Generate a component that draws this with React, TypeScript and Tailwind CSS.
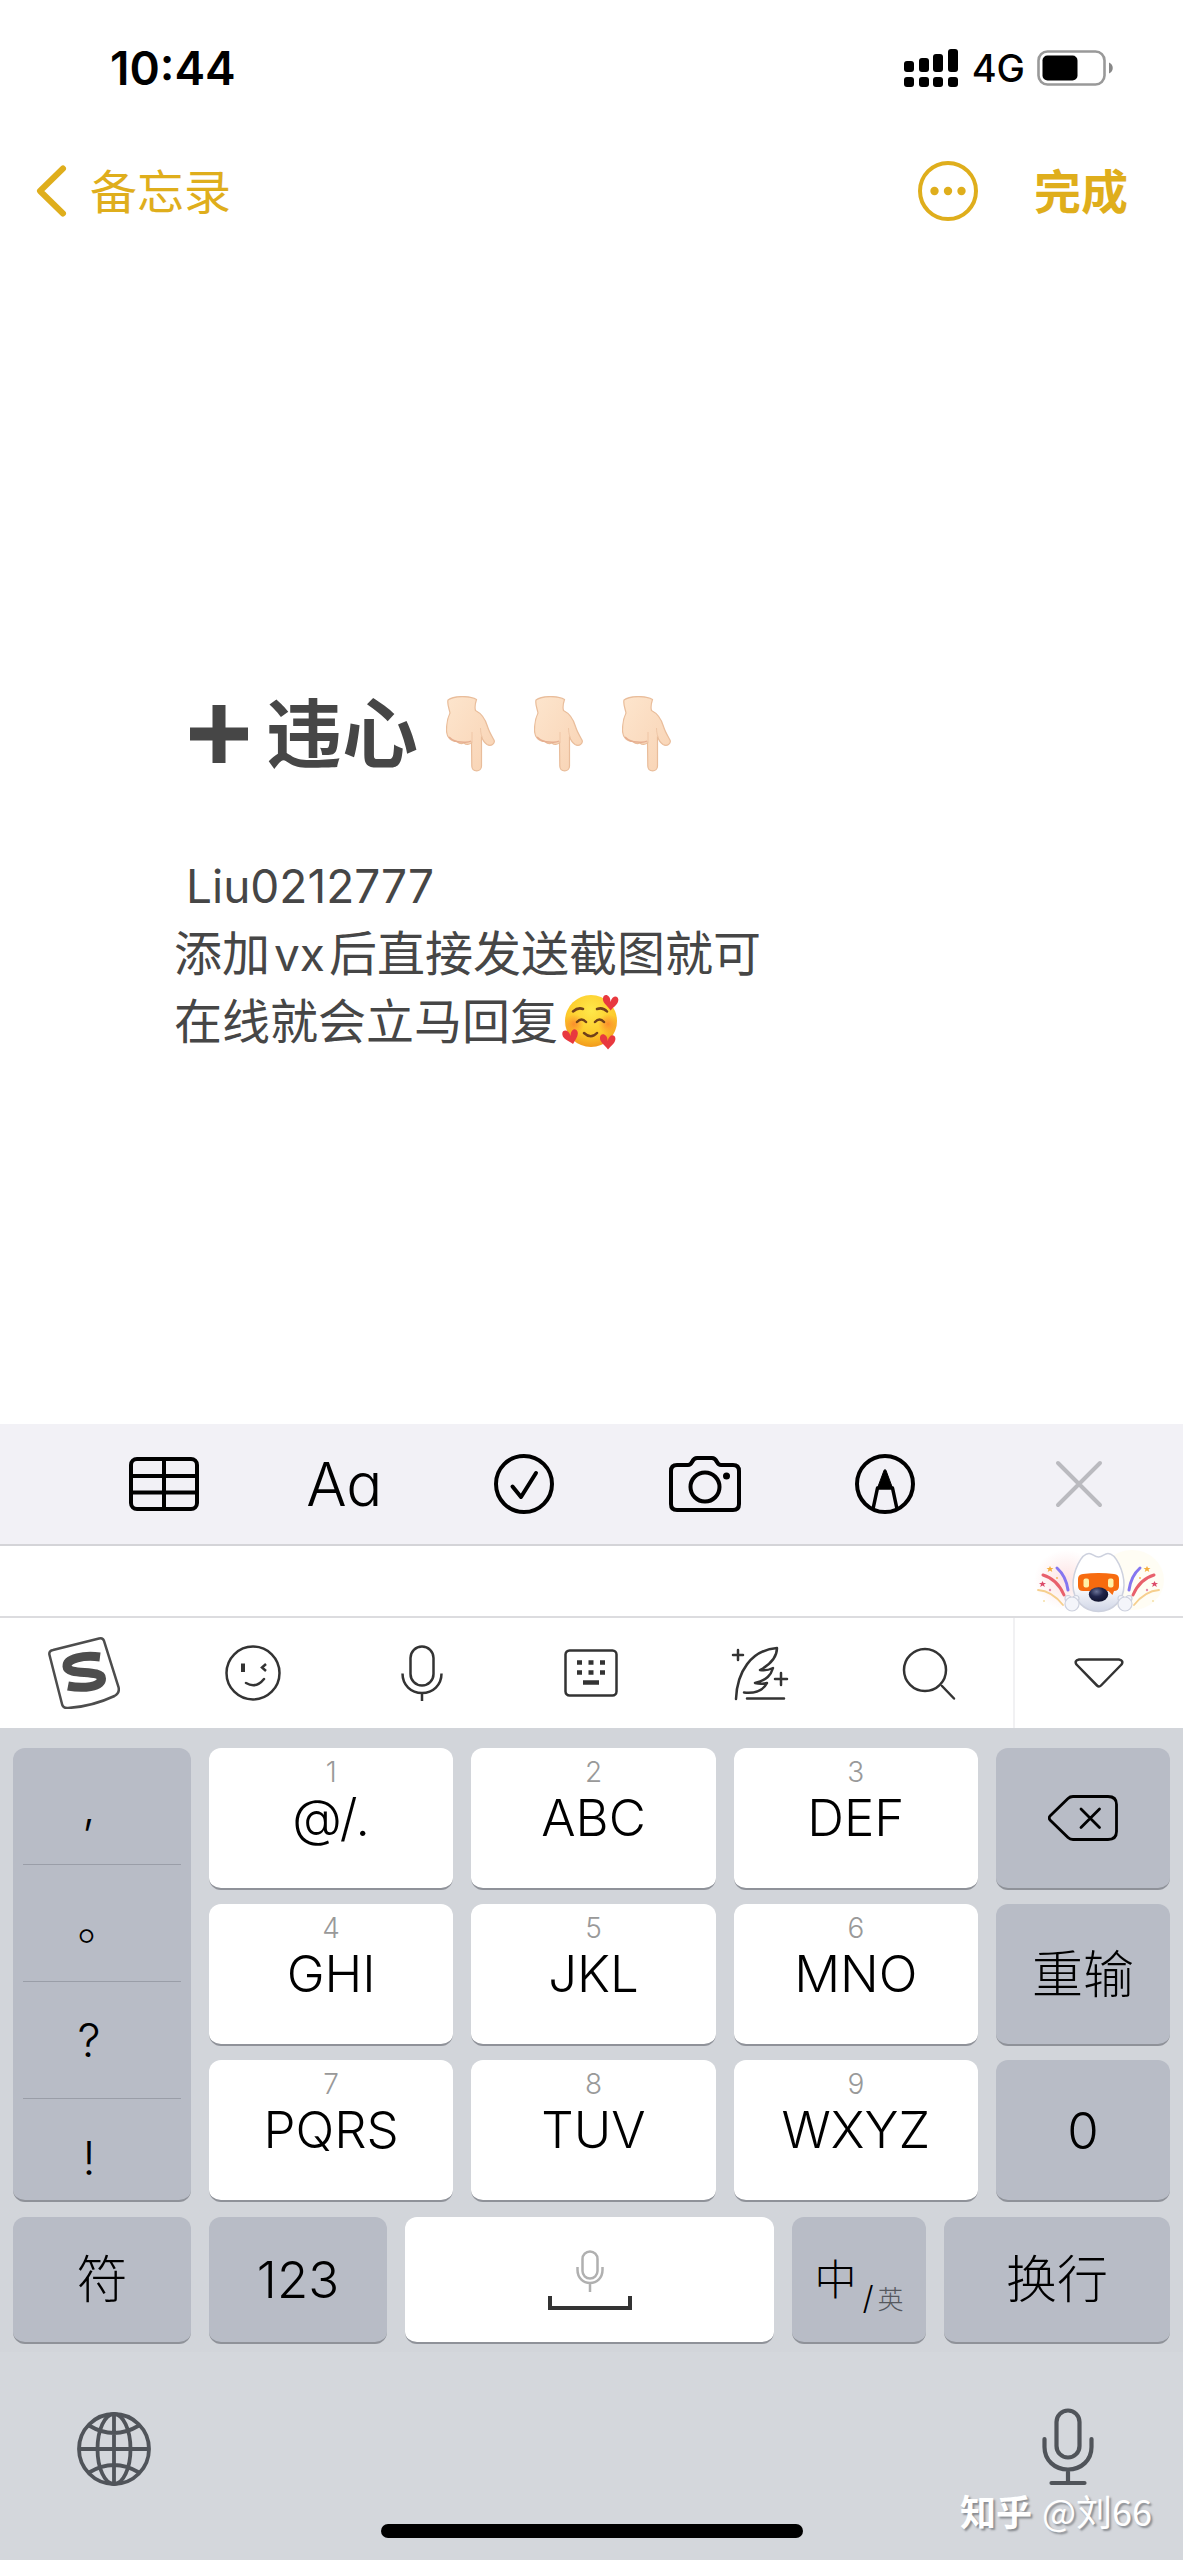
import type { ReactNode } from "react";

const letterKeys = [
  ["1", "@/."],
  ["2", "ABC"],
  ["3", "DEF"],
  ["4", "GHI"],
  ["5", "JKL"],
  ["6", "MNO"],
  ["7", "PQRS"],
  ["8", "TUV"],
  ["9", "WXYZ"],
];

const punctuation = [",", "。", "?", "!"];

function StatusBar() {
  const bars = [
    { x: 0, top: 12 },
    { x: 15, top: 9 },
    { x: 29, top: 5 },
    { x: 44, top: 0 },
  ];
  return (
    <header className="flex h-[136px] items-center justify-between pr-[69px] pl-[110px] text-black">
      <time className="text-[46px] leading-none font-semibold">10:44</time>
      <div className="flex items-center">
        <svg width="54" height="38" viewBox="0 0 54 38" role="img" aria-label="信号">
          {bars.map((b) => (
            <g key={b.x}>
              <rect x={b.x} y={b.top} width="10" height={23 - b.top} rx="3" />
              <rect x={b.x} y="28" width="10" height="10" rx="3" />
            </g>
          ))}
        </svg>
        <span className="mr-3 ml-3.5 text-[38px] leading-none font-medium">4G</span>
        <svg width="77" height="36" viewBox="0 0 77 36" role="img" aria-label="电池">
          <rect x="1.5" y="1.5" width="66" height="33" rx="9" fill="none" stroke="#999" strokeWidth="2.6" />
          <rect x="5.5" y="5.5" width="35" height="25" rx="5" />
          <path d="M72 12.500c5 2 5 9 0 11z" fill="#888" />
        </svg>
      </div>
    </header>
  );
}

function NavBar() {
  return (
    <nav className="flex h-[110px] items-center justify-between pr-[55px] pl-[34px] text-[#dfae1c]">
      <a href="#notes" className="flex items-center gap-[22px] text-[47px] leading-none">
        <svg width="34" height="54" viewBox="0 0 34 54" fill="none" stroke="currentColor" strokeWidth="6" strokeLinecap="round" strokeLinejoin="round" aria-hidden="true">
          <path d="M29 4.500 6 27l23 22.500" />
        </svg>
        备忘录
      </a>
      <div className="flex items-center gap-[56px]">
        <button type="button" aria-label="更多">
          <svg width="60" height="60" viewBox="0 0 60 60" fill="currentColor">
            <circle cx="30" cy="30" r="28" fill="none" stroke="currentColor" strokeWidth="4" />
            <circle cx="16.5" cy="30" r="4.2" />
            <circle cx="30" cy="30" r="4.2" />
            <circle cx="43.5" cy="30" r="4.2" />
          </svg>
        </button>
        <button type="button" className="text-[47px] leading-none font-bold">
          完成
        </button>
      </div>
    </nav>
  );
}

function PointingHand() {
  return (
    <svg width="50" height="76" viewBox="0 0 50 76" role="img" aria-label="👇🏻">
      <defs>
        <linearGradient id="skin" x1="0" y1="0" x2="1" y2="1">
          <stop offset="0" stopColor="#fde5cd" />
          <stop offset="1" stopColor="#f8d3b4" />
        </linearGradient>
      </defs>
      <path
        d="M2 4C8-.5 24-.5 30.500 3.500 29 8 28.500 11 29.500 14.500c6 3 10 9 12 16 1.500 5 4 9 6.500 13.500 1.500 3.500-3 7-7 4.500-3-2-4.500-5-5.500-8V70c0 6.500-9.500 6.500-9.700 0L25.500 46.500c-2 2.500-5.500 2.500-7.500.5-3 1.500-5.500 0-7-1.500C5 45.500.5 41.500.5 34c0-7 1-12 3.500-17C3 12 1 8 2 4Z"
        fill="url(#skin)"
        stroke="#e9bd9b"
        strokeWidth="1.2"
      />
      <path d="M26 47V36" stroke="#efc6a6" strokeWidth="1" fill="none" />
      <path d="M36 41c-1-3-1.500-6-1.500-9" stroke="#efc6a6" strokeWidth="1" fill="none" />
      <path d="M3 41c4 4 8 5 12 5s7 1 10-1" stroke="#e6ae90" strokeWidth="1.5" fill="none" />
    </svg>
  );
}

function LovingFace() {
  const heart = "M0 4.500C-1-4-9-4.500-9 1.500-9 7-3 9 1.500 14 5 9 9.500 5.500 8.500.5 7-4.500 1-3 0 4.500Z";
  return (
    <svg className="ml-1" width="58" height="56" viewBox="0 0 58 56" role="img" aria-label="🥰">
      <defs>
        <radialGradient id="face" cx=".5" cy=".3" r=".7">
          <stop offset="0" stopColor="#ffe84a" />
          <stop offset=".65" stopColor="#fdcb2b" />
          <stop offset="1" stopColor="#f29a1c" />
        </radialGradient>
        <radialGradient id="cheek">
          <stop offset="0" stopColor="#fb7a2c" stopOpacity=".75" />
          <stop offset="1" stopColor="#fb7a2c" stopOpacity="0" />
        </radialGradient>
      </defs>
      <circle cx="29" cy="27" r="26" fill="url(#face)" />
      <circle cx="12" cy="30" r="10" fill="url(#cheek)" />
      <circle cx="46" cy="30" r="10" fill="url(#cheek)" />
      <g fill="none" stroke="#70401a" strokeWidth="2.5" strokeLinecap="round">
        <path d="M11 17.500q5-4.500 10-2.500M35 15q6-2 10 2.500M15 28q4.500-5 9 0M33 28q4.500-5 9 0M22 39q7 6.500 13 0" />
      </g>
      <g fill="#e8383f">
        <path d={heart} transform="translate(49 4) rotate(8) scale(.88)" />
        <path d={heart} transform="translate(8 38) rotate(-8) scale(.88)" />
        <path d={heart} transform="translate(46 43) rotate(6) scale(.88)" />
      </g>
    </svg>
  );
}

function Note() {
  return (
    <main className="flex-1 px-[174px] pt-[440px] text-[#464646]">
      <h1 className="flex h-[96px] items-center pl-4 text-[76px] leading-none font-bold">
        <svg className="mr-[18px]" width="58" height="58" viewBox="0 0 58 58" fill="currentColor" role="img" aria-label="➕">
          <path d="M22.500 0h13v22.500H58v13H35.500V58h-13V35.500H0v-13h22.500z" />
        </svg>
        违心
        <span className="ml-7 flex gap-[38px]">
          <PointingHand />
          <PointingHand />
          <PointingHand />
        </span>
      </h1>
      <div className="mt-[71px] text-[48px] leading-[67px]">
        <p className="pl-3 text-[46px]">Liu0212777</p>
        <p>
          添加<span className="px-1 text-[46px]">vx</span>后直接发送截图就可
        </p>
        <p className="flex items-center">
          在线就会立马回复
          <LovingFace />
        </p>
      </div>
    </main>
  );
}

function ToolButton({ label, children }: { label: string; children: ReactNode }) {
  return (
    <button type="button" aria-label={label} className="flex h-full items-center justify-center">
      {children}
    </button>
  );
}

function FormatBar() {
  return (
    <div className="grid h-[122px] grid-cols-[repeat(5,1fr)_208px] border-b-2 border-[#d4d4d8] bg-[#f2f1f6] pl-[74px] text-black">
      <ToolButton label="表格">
        <svg width="70" height="54" viewBox="0 0 70 54" fill="none" stroke="currentColor" strokeWidth="4">
          <rect x="2" y="2" width="66" height="50" rx="6" />
          <path d="M2 19h66M2 35.500h66M35 2v50" />
        </svg>
      </ToolButton>
      <button type="button" className="text-[60px] leading-none font-light [font-feature-settings:'cv11']">
        Aa
      </button>
      <ToolButton label="核对清单">
        <svg width="60" height="60" viewBox="0 0 60 60" fill="none" stroke="currentColor" strokeWidth="4" strokeLinecap="round" strokeLinejoin="round">
          <circle cx="30" cy="30" r="28" />
          <path d="M18.500 32.500 27 43l15-24" />
        </svg>
      </ToolButton>
      <ToolButton label="相机">
        <svg width="72" height="56" viewBox="0 0 72 56" fill="none" stroke="currentColor" strokeWidth="4" strokeLinejoin="round">
          <path d="M8 9h11c2 0 3-1 4-3 1.500-3 3-4 5-4h15c2 0 3.500 1 5 4 1 2 2 3 4 3h12c4 0 6 2 6 6v33c0 4-2 6-6 6H8c-4 0-6-2-6-6V15c0-4 2-6 6-6Z" />
          <circle cx="36" cy="31" r="14.5" />
          <circle cx="57.5" cy="20" r="3.5" fill="currentColor" stroke="none" />
        </svg>
      </ToolButton>
      <ToolButton label="标记">
        <svg width="60" height="60" viewBox="0 0 60 60" fill="none" stroke="currentColor" strokeWidth="4" strokeLinejoin="round">
          <circle cx="30" cy="30" r="28" />
          <path d="m18 55 4.500-21h15L42 55" strokeWidth="3.5" />
          <path d="M22.500 34 29 16.500q1-2 2 0L37.500 34Z" fill="currentColor" strokeWidth="1" />
        </svg>
      </ToolButton>
      <ToolButton label="关闭">
        <svg width="48" height="48" viewBox="0 0 48 48" stroke="#bababf" strokeWidth="4" strokeLinecap="round">
          <path d="m3 3 42 42M45 3 3 45" />
        </svg>
      </ToolButton>
    </div>
  );
}

function FireworkTrails() {
  return (
    <g fill="none" strokeLinecap="round">
      <path d="M27 28q9 8 11 22" stroke="#8576f0" strokeWidth="3" />
      <path d="M13 35q14 4 21 20" stroke="#e8606c" strokeWidth="3" />
      <path d="M8 50q14 1 25 15" stroke="#f6cf8d" strokeWidth="1.8" />
      <path d="m20 26 1 2h2.500l-2 1.500.8 2.500-2.300-1.500-2.300 1.500.8-2.500-2-1.500H19z" fill="#f5ad3c" />
      <path d="m12.500 41 1 2H16l-2 1.500.8 2.500-2.300-1.500-2.300 1.500.8-2.500-2-1.500h2.500z" fill="#dc4b6a" />
      <circle cx="20" cy="50" r="1.2" fill="#e58cae" />
      <circle cx="27" cy="38" r="1" fill="#f5b860" />
      <circle cx="14" cy="61" r="1" fill="#f5dfa8" />
    </g>
  );
}

function Mascot() {
  return (
    <svg width="140" height="71" viewBox="0 6 140 71" aria-hidden="true">
      <defs>
        <radialGradient id="glowPink">
          <stop offset="0" stopColor="#fde3e3" />
          <stop offset="1" stopColor="#fde3e3" stopOpacity="0" />
        </radialGradient>
        <linearGradient id="head" x1="0" y1="0" x2="0" y2="1">
          <stop offset=".55" stopColor="#fff" />
          <stop offset="1" stopColor="#cfd5e6" />
        </linearGradient>
        <radialGradient id="nose" cx=".4" cy=".3" r=".7">
          <stop offset="0" stopColor="#6b7397" />
          <stop offset=".5" stopColor="#20254a" />
          <stop offset="1" stopColor="#11142e" />
        </radialGradient>
      </defs>
      <ellipse cx="36" cy="40" rx="32" ry="30" fill="url(#glowPink)" />
      <ellipse cx="102" cy="40" rx="32" ry="30" fill="#fffbe9" opacity=".5" />
      <FireworkTrails />
      <g transform="matrix(-1 0 0 1 137 0)">
        <FireworkTrails />
      </g>
      <path
        d="M59 13.500c4 0 5 3.500 9.500 3.500s5.500-3.500 9.500-3.500c8 0 16 18 16 31.500C94 60 83 71.500 68.500 71.500S43 60 43 45c0-13.500 8-31.500 16-31.500Z"
        fill="url(#head)"
        stroke="#cdd1de"
        strokeWidth="1.5"
      />
      <path d="M53 34q15.500-2 31 0 5 .5 5 5v7q0 5-5 5l-1.500 4-4-4H53q-5 0-5-5v-7q0-4.500 5-5Z" fill="#f76b0f" />
      <rect x="53.5" y="38.5" width="5.5" height="9" rx="2" fill="#fff1a8" />
      <rect x="78" y="38.5" width="5.5" height="9" rx="2" fill="#fff1a8" />
      <ellipse cx="68.5" cy="54.5" rx="9.7" ry="7.3" fill="url(#nose)" />
      <g fill="#f4f5fa" stroke="#cdd1de" strokeWidth="1.2">
        <circle cx="38" cy="58.5" r="3" />
        <circle cx="46" cy="58.5" r="3" />
        <circle cx="91" cy="58.5" r="3" />
        <circle cx="99" cy="58.5" r="3" />
        <circle cx="42" cy="64" r="7" />
        <circle cx="95" cy="64" r="7" />
      </g>
    </svg>
  );
}

function InputMethodBar() {
  return (
    <div className="grid h-[110px] grid-cols-[repeat(6,1fr)_170px] bg-white text-[#333]">
      <ToolButton label="搜狗输入法">
        <svg width="72" height="72" viewBox="0 0 72 72" fill="none" stroke="#4d4d4d">
          <path d="M5 13 51 1.500q4-1 5 2.500l14.500 46q1.500 6-4 9Q44 69.500 20 71q-5 .5-6-4L1.500 18q-1-4 3.500-5Z" strokeWidth="2.5" />
          <path d="M52 20C36 18 18.500 21 19 29.500c.5 9.500 34.500 2.500 34.500 12 0 8.500-18 10.500-33.500 7.500" strokeWidth="9" />
        </svg>
      </ToolButton>
      <ToolButton label="表情">
        <svg width="56" height="56" viewBox="0 0 56 56" fill="none" stroke="currentColor" strokeWidth="2.5">
          <circle cx="28" cy="28" r="26.5" />
          <path d="M18 18.500v8.500" strokeWidth="4" />
          <path d="m41 19-4 3.500 4 3.500" />
          <path d="M21 38q10 6 18-4" strokeLinecap="round" />
        </svg>
      </ToolButton>
      <ToolButton label="语音">
        <svg width="42" height="56" viewBox="0 0 42 56" fill="none" stroke="currentColor" strokeWidth="2.5">
          <rect x="9.5" y="1.5" width="23" height="39" rx="11.5" />
          <path d="M1.500 28.500C1.500 40 10 48 21 48s19.500-8 19.500-19.500M21 48v8" />
        </svg>
      </ToolButton>
      <ToolButton label="键盘">
        <svg width="54" height="48" viewBox="0 0 54 48" fill="none" stroke="currentColor">
          <rect x="1.5" y="1.5" width="51" height="45" rx="4" strokeWidth="2.5" />
          <path d="M13 13.500h28M13 23.500h28" strokeWidth="4.5" strokeDasharray="5 6.5" />
          <path d="M19 33.500h16" strokeWidth="4.5" />
        </svg>
      </ToolButton>
      <ToolButton label="写作">
        <svg width="58" height="58" viewBox="0 0 58 58" fill="none" stroke="currentColor" strokeWidth="2.5" strokeLinejoin="round" strokeLinecap="round">
          <path d="M5 55C6 28 20 6 46 4c0 8-4 15-17 22 5 1 9 0 13-2-2 7-6 12-18 15 4 1 8 1 12 0-4 8-13 10.500-23 9.500M16 54.500h37" />
          <path d="M7 6v10M2 11h10M50 29v12M44 35h12" />
        </svg>
      </ToolButton>
      <ToolButton label="搜索">
        <svg width="54" height="56" viewBox="0 0 54 56" fill="none" stroke="currentColor" strokeWidth="2.5" strokeLinecap="round">
          <circle cx="23" cy="25" r="21" />
          <path d="m40 41 12 12.500" />
        </svg>
      </ToolButton>
      <button type="button" aria-label="收起键盘" className="flex items-center justify-center border-l-2 border-[#f1f1f3]">
        <svg width="50" height="30" viewBox="0 0 50 30" fill="none" stroke="currentColor" strokeWidth="2.5" strokeLinejoin="round">
          <path d="M5 1.500h40q5 1 2.500 5L27 27.500q-2 2-4 0L2.500 6.500Q0 2.500 5 1.500Z" />
        </svg>
      </button>
    </div>
  );
}

function Key({ label, dark, children }: { label?: string; dark?: boolean; children: ReactNode }) {
  return (
    <button
      type="button"
      aria-label={label}
      className={
        dark
          ? "flex items-center justify-center rounded-xl border-b-2 border-[#8f9299] bg-[#b8bcc6] text-[51px] leading-none font-light"
          : "flex flex-col items-center rounded-xl border-b-2 border-[#8f9299] bg-white font-light"
      }
    >
      {children}
    </button>
  );
}

function MicIcon() {
  return (
    <svg width="28" height="42" viewBox="0 0 28 42" fill="none" stroke="#b0b0b0" strokeWidth="2.5">
      <rect x="6.5" y="1.5" width="15" height="27" rx="7.5" />
      <path d="M1.500 17v3C1.500 27.500 7 33 14 33s12.500-5.500 12.500-13v-3M14 33v9" />
    </svg>
  );
}

function LetterKey({ digit, letters }: { digit: string; letters: string }) {
  return (
    <Key>
      <span className="pt-2 text-[28px] leading-8 text-[#999]">{digit}</span>
      <span className="text-[51px] leading-[60px]">{letters}</span>
    </Key>
  );
}

function Keyboard() {
  return (
    <section aria-label="键盘" className="flex flex-col gap-[15px] bg-[#d2d5da] px-[13px] pt-5 pb-2 text-black">
      <div className="grid auto-rows-[142px] grid-cols-[178px_1fr_1fr_1fr_174px] gap-x-[18px] gap-y-3.5">
        <div className="row-span-3 flex flex-col overflow-hidden rounded-xl border-b-2 border-[#8f9299] bg-[#b8bcc6] px-2.5">
          {punctuation.map((mark) => (
            <button
              key={mark}
              type="button"
              className="h-[117px] shrink-0 border-b border-[#9a9ea8] pr-[26px] text-[46px] leading-none font-light last:border-b-0 [font-feature-settings:'halt']"
            >
              {mark}
            </button>
          ))}
        </div>
        {letterKeys.slice(0, 3).map(([digit, letters]) => (
          <LetterKey key={digit} digit={digit} letters={letters} />
        ))}
        <Key dark label="删除">
          <svg width="70" height="46" viewBox="0 0 70 46" fill="none" stroke="currentColor" strokeWidth="2.8" strokeLinejoin="round" strokeLinecap="round">
            <path d="M25 1.500h35q8.500 0 8.500 8v27q0 8-8.500 8H25q-3 0-5-2L2 25q-1.500-2 0-4L20 3.500q2-2 5-2Z" />
            <path d="m33 14 18.500 18.500M51.500 14 33 32.500" />
          </svg>
        </Key>
        {letterKeys.slice(3, 6).map(([digit, letters]) => (
          <LetterKey key={digit} digit={digit} letters={letters} />
        ))}
        <Key dark>重输</Key>
        {letterKeys.slice(6).map(([digit, letters]) => (
          <LetterKey key={digit} digit={digit} letters={letters} />
        ))}
        <Key dark>0</Key>
      </div>
      <div className="grid h-[127px] grid-cols-[178px_178px_1fr_134px_226px] gap-[18px]">
        <Key dark>符</Key>
        <Key dark>123</Key>
        <Key label="空格">
          <span className="flex h-full flex-col items-center justify-center gap-1">
            <MicIcon />
            <svg width="84" height="14" viewBox="0 0 84 14" fill="none" stroke="#333" strokeWidth="4">
              <path d="M2 0v12h80V0" />
            </svg>
          </span>
        </Key>
        <Key dark>
          <span className="text-[42px]">中</span>
          <span className="ml-1.5 flex items-baseline gap-1 self-end pb-7 text-[32px]">
            /<span className="text-[26px] text-[#55585e]">英</span>
          </span>
        </Key>
        <Key dark>换行</Key>
      </div>
    </section>
  );
}

function SystemBar() {
  return (
    <footer className="relative h-[208px] bg-[#d4d7dc] text-[#50545a]">
      <div className="flex h-[172px] items-start justify-between pt-14 pr-[89px] pl-[77px]">
        <button type="button" aria-label="切换键盘" className="pt-1">
          <svg width="74" height="74" viewBox="0 0 74 74" fill="none" stroke="currentColor" strokeWidth="3.8">
            <circle cx="37" cy="37" r="35" />
            <ellipse cx="37" cy="37" rx="16.5" ry="35" />
            <path d="M37 2v70M2 37h70M12 13.500q25 15 50 0M12 60.500q25-15 50 0" />
          </svg>
        </button>
        <button type="button" aria-label="听写">
          <svg width="52" height="78" viewBox="0 0 52 78" fill="none" stroke="currentColor" strokeWidth="4.2" strokeLinecap="round">
            <rect x="14.5" y="2.5" width="23" height="47" rx="11.5" />
            <path d="M2.500 31v8c0 13 10 22.500 23.500 22.500S49.500 52 49.500 39v-8M26 61.500V75M9.500 75h33" />
          </svg>
        </button>
      </div>
      <div className="mx-auto h-3.5 w-[422px] rounded-full bg-black" />
      <p className="absolute right-[31px] bottom-8 flex items-center gap-2.5 font-['Noto_Sans_CJK_SC',sans-serif] text-[36px] leading-none text-white [text-shadow:2px_2px_2px_#8a8d92]">
        <span className="font-bold">知乎</span>
        <span>@刘66</span>
      </p>
    </footer>
  );
}

export default function App() {
  return (
    <div lang="zh-CN" className="flex min-h-screen flex-col bg-white font-['Inter','Noto_Sans_CJK_SC',sans-serif]">
      <StatusBar />
      <NavBar />
      <Note />
      <FormatBar />
      <div className="flex h-[72px] justify-end border-b-2 border-[#dcdcdf] pr-[13px]">
        <Mascot />
      </div>
      <InputMethodBar />
      <Keyboard />
      <SystemBar />
    </div>
  );
}
